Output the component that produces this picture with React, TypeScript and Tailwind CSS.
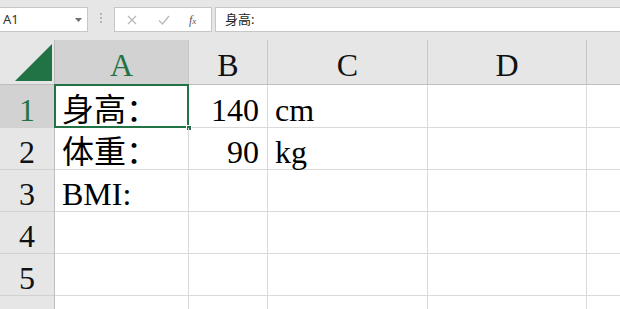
import { Fragment } from "react";

const serif = "font-['Liberation_Serif','Noto_Sans_CJK_SC',serif]";
const sans = "font-['Noto_Sans','Noto_Sans_CJK_SC',sans-serif]";

const columns = ["A", "B", "C", "D", ""];

const rows: { n: number; a?: string; b?: string; c?: string }[] = [
  { n: 1, a: "身高：", b: "140", c: "cm" },
  { n: 2, a: "体重：", b: "90", c: "kg" },
  { n: 3, a: "BMI:" },
  { n: 4 },
  { n: 5 },
  { n: 6 },
];

const gridCols = "grid grid-cols-[55px_134px_79px_160px_159px_1fr]";

function FormulaBar() {
  return (
    <div className={`flex h-10 items-start bg-[#e6e6e6] pt-[7px] ${sans}`}>
      <div className="flex h-[25px] w-[88px] items-center justify-between border border-l-0 border-[#c6c6c6] bg-white pl-[3px] pr-[5px]">
        <span className="text-[13px] text-[#333]">A1</span>
        <svg width="7" height="4" viewBox="0 0 7 4">
          <path d="M0 0h7L3.5 4z" fill="#707070" />
        </svg>
      </div>
      <div className="flex w-[26px] justify-center pt-[6px]">
        <div className="flex flex-col gap-[2px]">
          <span className="h-[2px] w-[2px] bg-[#b4b4b4]" />
          <span className="h-[2px] w-[2px] bg-[#b4b4b4]" />
          <span className="h-[2px] w-[2px] bg-[#b4b4b4]" />
        </div>
      </div>
      <div className="flex h-[25px] w-[98px] items-center border border-[#c6c6c6] bg-white">
        <svg className="ml-[12px]" width="10" height="10" viewBox="0 0 10 10">
          <path d="M1 1l8 8M9 1l-8 8" stroke="#b8b8b8" strokeWidth="1.2" />
        </svg>
        <svg className="ml-[21px]" width="12" height="10" viewBox="0 0 12 10">
          <path d="M1 5.5l3.5 3.5L11 1" stroke="#b8b8b8" strokeWidth="1.3" fill="none" />
        </svg>
        <span className={`ml-[19px] text-[12px] italic text-[#555] ${serif}`}>
          f<span className="text-[9px]">x</span>
        </span>
      </div>
      <div className="ml-[3px] flex h-[25px] flex-1 items-center border border-r-0 border-[#c6c6c6] bg-white pl-[9px]">
        <span className="text-[13px] text-[#222]">身高:</span>
      </div>
    </div>
  );
}

function HeaderRow() {
  return (
    <div className={`${gridCols} h-[45px] bg-[#e6e6e6] ${serif}`}>
      <div className="flex items-end justify-end border-r border-b border-[#bdbdbd] pb-[3px] pr-[2px]">
        <svg width="37" height="37" viewBox="0 0 37 37">
          <path d="M0 37L37 0V37z" fill="#217346" />
        </svg>
      </div>
      {columns.map((c, i) => (
        <div
          key={i}
          className={`flex items-end justify-center border-b border-b-[#bdbdbd] pb-[3px] text-[32px] leading-none ${
            i === 0 ? "bg-[#d2d2d2] text-[#217346]" : "text-[#111]"
          } ${i < 4 ? "border-r border-r-[#c6c6c6]" : ""}`}
        >
          {c}
        </div>
      ))}
    </div>
  );
}

export default function App() {
  return (
    <div className="h-[309px] w-[620px] overflow-hidden bg-white">
      <FormulaBar />
      <HeaderRow />
      {rows.map((r) => (
        <div
          key={r.n}
          className={`${gridCols} ${r.n === 1 ? "h-[43px]" : "h-[42px]"} ${serif} text-[32px] leading-none`}
        >
          <div
            className={`flex items-end justify-center border-r border-b border-r-[#bdbdbd] border-b-[#d0d0d0] pb-[1px] ${
              r.n === 1 ? "bg-[#d2d2d2] text-[#217346]" : "bg-[#e6e6e6] text-[#111]"
            }`}
          >
            {r.n < 6 ? r.n : null}
          </div>
          <div className="relative flex items-end border-r border-b border-[#dadada] pb-[1px] pl-[7px] text-black">
            {r.a}
            {r.n === 1 ? (
              <Fragment>
                <div className="pointer-events-none absolute -top-px -left-px -right-px -bottom-px border-2 border-[#217346]" />
                <div className="absolute -right-[4px] -bottom-[4px] h-[6px] w-[6px] border border-white bg-[#217346]" />
              </Fragment>
            ) : null}
          </div>
          <div className="flex items-end justify-end border-r border-b border-[#dadada] pb-[1px] pr-[8px] text-black">
            {r.b}
          </div>
          <div className="flex items-end border-r border-b border-[#dadada] pb-[1px] pl-[7px] text-black">
            {r.c}
          </div>
          <div className="border-r border-b border-[#dadada]" />
          <div className="border-b border-[#dadada]" />
        </div>
      ))}
    </div>
  );
}
